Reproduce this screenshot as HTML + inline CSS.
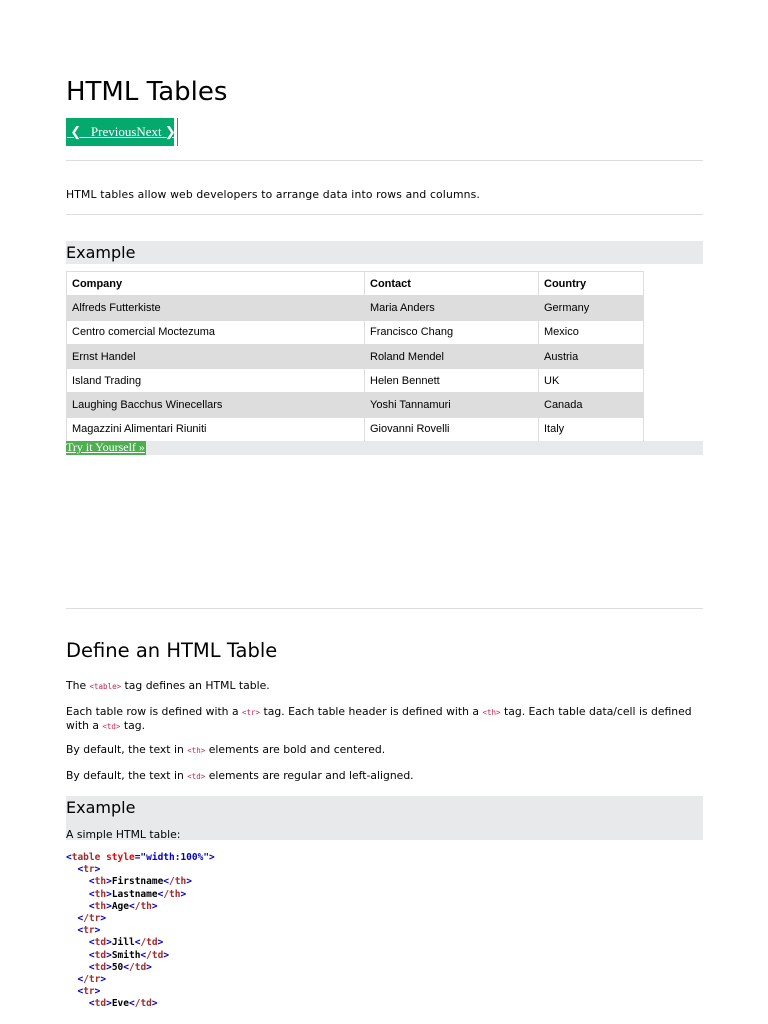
<!DOCTYPE html>
<html><head><meta charset="utf-8"><style>
body{margin:0;background:#fff;width:768px;height:1024px;overflow:hidden;position:relative;font-family:"DejaVu Sans",sans-serif;color:#000}
.a{position:absolute}
h1{position:absolute;margin:0;font-weight:normal;font-family:"DejaVu Sans",sans-serif}
.hr{position:absolute;left:66px;width:637px;height:1px;background:#ddd}
p{position:absolute;margin:0;font-size:10.8px;left:66px;white-space:nowrap;line-height:13px}
code{font-family:"DejaVu Sans Mono",monospace;color:#c7254e;font-size:7.5px}
table{position:absolute;left:66px;top:271px;border-collapse:collapse;font-family:"Liberation Sans",sans-serif;font-size:11px;width:578px}
td,th{border:1px solid #ddd;height:24.3px;padding:0 0 0 5px;text-align:left;box-sizing:border-box}
tr:nth-child(even){background:#ddd}
pre{position:absolute;left:66px;top:852px;margin:0;font-family:"DejaVu Sans Mono",monospace;font-size:9.5px;line-height:12.2px;font-weight:bold;color:#000}
.t{color:#a52a2a}.b{color:#0000cd}.r{color:#e00}
</style></head><body>
<h1 style="left:66px;top:77px;font-size:26px">HTML Tables</h1>
<div class="a" style="left:66px;top:118px;width:112px;height:28px;background:#04aa6d"></div>
<div class="a" style="left:174px;top:118px;width:3px;height:28px;background:#fff"></div>
<div class="a" style="left:67px;top:124px;font-family:'Liberation Serif',serif;font-size:13px;color:#fff;text-decoration:underline;white-space:nowrap">&nbsp;❮&nbsp;&nbsp;&nbsp;PreviousNext ❯</div>
<div class="hr" style="top:160px"></div>
<p style="top:188px;letter-spacing:0.15px">HTML tables allow web developers to arrange data into rows and columns.</p>
<div class="hr" style="top:214px"></div>
<div class="a" style="left:66px;top:241px;width:637px;height:23px;background:#e7e9eb"></div>
<div class="a" style="left:66px;top:243px;font-size:16px">Example</div>
<table>
<tr><th style="width:298px">Company</th><th style="width:174px">Contact</th><th>Country</th></tr>
<tr><td>Alfreds Futterkiste</td><td>Maria Anders</td><td>Germany</td></tr>
<tr><td>Centro comercial Moctezuma</td><td>Francisco Chang</td><td>Mexico</td></tr>
<tr><td>Ernst Handel</td><td>Roland Mendel</td><td>Austria</td></tr>
<tr><td>Island Trading</td><td>Helen Bennett</td><td>UK</td></tr>
<tr><td>Laughing Bacchus Winecellars</td><td>Yoshi Tannamuri</td><td>Canada</td></tr>
<tr><td>Magazzini Alimentari Riuniti</td><td>Giovanni Rovelli</td><td>Italy</td></tr>
</table>
<div class="a" style="left:66px;top:441px;width:637px;height:14px;background:#e7e9eb"></div>
<div class="a" style="left:66px;top:441px;width:80px;height:14px;background:#4caf50"></div>
<div class="a" style="left:66px;top:440px;font-family:'Liberation Serif',serif;font-size:12px;color:#fff;text-decoration:underline;white-space:nowrap">Try it Yourself »</div>
<div class="hr" style="top:608px"></div>
<h1 style="left:66px;top:639px;font-size:19.5px">Define an HTML Table</h1>
<p style="top:679px">The <code>&lt;table&gt;</code> tag defines an HTML table.</p>
<p style="top:705px">Each table row is defined with a <code>&lt;tr&gt;</code> tag. Each table header is defined with a <code>&lt;th&gt;</code> tag. Each table data/cell is defined<br>with a <code>&lt;td&gt;</code> tag.</p>
<p style="top:743px">By default, the text in <code>&lt;th&gt;</code> elements are bold and centered.</p>
<p style="top:769px">By default, the text in <code>&lt;td&gt;</code> elements are regular and left-aligned.</p>
<div class="a" style="left:66px;top:796px;width:637px;height:44px;background:#e7e9eb"></div>
<div class="a" style="left:66px;top:798px;font-size:16px">Example</div>
<p style="top:828px">A simple HTML table:</p>
<pre><span class="b">&lt;</span><span class="t">table</span> <span class="r">style</span><span class="b">="width:100%"&gt;</span>
  <span class="b">&lt;</span><span class="t">tr</span><span class="b">&gt;</span>
    <span class="b">&lt;</span><span class="t">th</span><span class="b">&gt;</span>Firstname<span class="b">&lt;</span><span class="t">/th</span><span class="b">&gt;</span>
    <span class="b">&lt;</span><span class="t">th</span><span class="b">&gt;</span>Lastname<span class="b">&lt;</span><span class="t">/th</span><span class="b">&gt;</span>
    <span class="b">&lt;</span><span class="t">th</span><span class="b">&gt;</span>Age<span class="b">&lt;</span><span class="t">/th</span><span class="b">&gt;</span>
  <span class="b">&lt;</span><span class="t">/tr</span><span class="b">&gt;</span>
  <span class="b">&lt;</span><span class="t">tr</span><span class="b">&gt;</span>
    <span class="b">&lt;</span><span class="t">td</span><span class="b">&gt;</span>Jill<span class="b">&lt;</span><span class="t">/td</span><span class="b">&gt;</span>
    <span class="b">&lt;</span><span class="t">td</span><span class="b">&gt;</span>Smith<span class="b">&lt;</span><span class="t">/td</span><span class="b">&gt;</span>
    <span class="b">&lt;</span><span class="t">td</span><span class="b">&gt;</span>50<span class="b">&lt;</span><span class="t">/td</span><span class="b">&gt;</span>
  <span class="b">&lt;</span><span class="t">/tr</span><span class="b">&gt;</span>
  <span class="b">&lt;</span><span class="t">tr</span><span class="b">&gt;</span>
    <span class="b">&lt;</span><span class="t">td</span><span class="b">&gt;</span>Eve<span class="b">&lt;</span><span class="t">/td</span><span class="b">&gt;</span></pre>
</body></html>
